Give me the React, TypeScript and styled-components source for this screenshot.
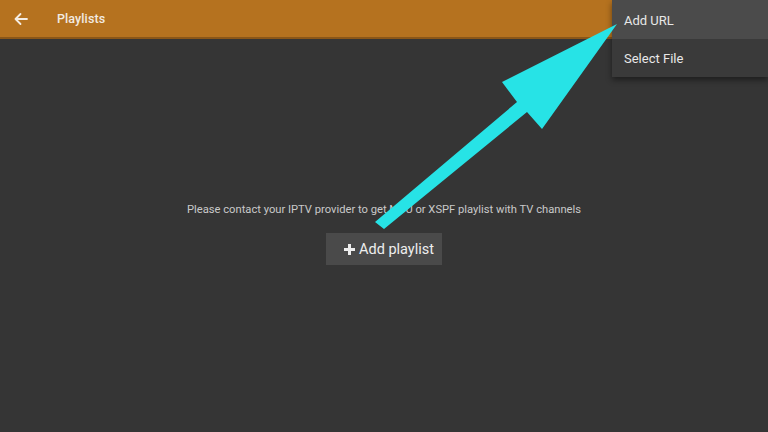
import React from "react";
import styled, { createGlobalStyle } from "styled-components";

const Global = createGlobalStyle`
  html, body { margin: 0; padding: 0; }
  body {
    width: 768px;
    height: 432px;
    overflow: hidden;
    background: #353535;
    font-family: Roboto, "Liberation Sans", Arial, sans-serif;
  }
`;

const Screen = styled.div`
  position: relative;
  width: 768px;
  height: 432px;
  background: #353535;
  display: flex;
  flex-direction: column;
`;

const Toolbar = styled.header`
  height: 37px;
  background: #b5721f;
  border-bottom: 2px solid #8a5618;
  display: flex;
  align-items: center;
  padding-left: 13px;
  gap: 28px;
  box-sizing: content-box;
`;

const BackButton = styled.span`
  display: flex;
  width: 16px;
  height: 16px;
  color: #f4ede4;
`;

const Title = styled.h1`
  margin: 0;
  font-size: 12.5px;
  font-weight: 500;
  color: #f2ebe2;
  letter-spacing: 0.1px;
`;

const Body = styled.main`
  flex: 1;
  display: flex;
  flex-direction: column;
  align-items: center;
  padding-top: 163px;
`;

const Hint = styled.p`
  margin: 0;
  font-size: 11.2px;
  color: #c9c9c9;
  line-height: 16px;
`;

const AddButton = styled.button`
  margin-top: 15px;
  width: 116px;
  height: 32px;
  border: none;
  background: #4a4a4a;
  color: #eeeeee;
  font-family: inherit;
  font-size: 14.5px;
  display: flex;
  align-items: center;
  justify-content: center;
  gap: 4px;
  padding: 0 0 0 10px;
`;

const Plus = styled.span`
  display: flex;
  width: 11px;
  height: 11px;
`;

const Menu = styled.ul`
  position: absolute;
  top: 0;
  right: 0;
  width: 156px;
  margin: 0;
  padding: 1px 0 0;
  list-style: none;
  background: #3a3a3a;
  box-shadow: 0 3px 6px rgba(0, 0, 0, 0.45);
`;

const MenuItem = styled.li<{ $active?: boolean }>`
  height: 38px;
  display: flex;
  align-items: center;
  padding-left: 12px;
  font-size: 13px;
  color: #e8e8e8;
  background: ${(p) => (p.$active ? "#4b4b4b" : "transparent")};
  box-shadow: ${(p) => (p.$active ? "0 -1px 0 #4b4b4b" : "none")};
`;

const Pointer = styled.svg`
  position: absolute;
  left: 0;
  top: 0;
  width: 768px;
  height: 432px;
  pointer-events: none;
`;

export default function App() {
  return (
    <>
      <Global />
      <Screen>
        <Toolbar>
          <BackButton>
            <svg viewBox="0 0 16 16" width="16" height="16" fill="none" stroke="currentColor" strokeWidth="1.8" strokeLinecap="round" strokeLinejoin="round">
              <path d="M14 8H2.5M7.5 3 2.5 8l5 5" />
            </svg>
          </BackButton>
          <Title>Playlists</Title>
        </Toolbar>
        <Body>
          <Hint>Please contact your IPTV provider to get M3U or XSPF playlist with TV channels</Hint>
          <AddButton>
            <Plus>
              <svg viewBox="0 0 11 11" width="11" height="11">
                <path d="M4 0h3v4h4v3H7v4H4V7H0V4h4z" fill="currentColor" />
              </svg>
            </Plus>
            Add playlist
          </AddButton>
        </Body>
        <Menu>
          <MenuItem $active>Add URL</MenuItem>
          <MenuItem>Select File</MenuItem>
        </Menu>
        <Pointer viewBox="0 0 768 432">
          <polygon
            points="617,24 542,129 527,112 384,229 375,222 517,102 502,82"
            fill="#27e3e6"
          />
        </Pointer>
      </Screen>
    </>
  );
}
